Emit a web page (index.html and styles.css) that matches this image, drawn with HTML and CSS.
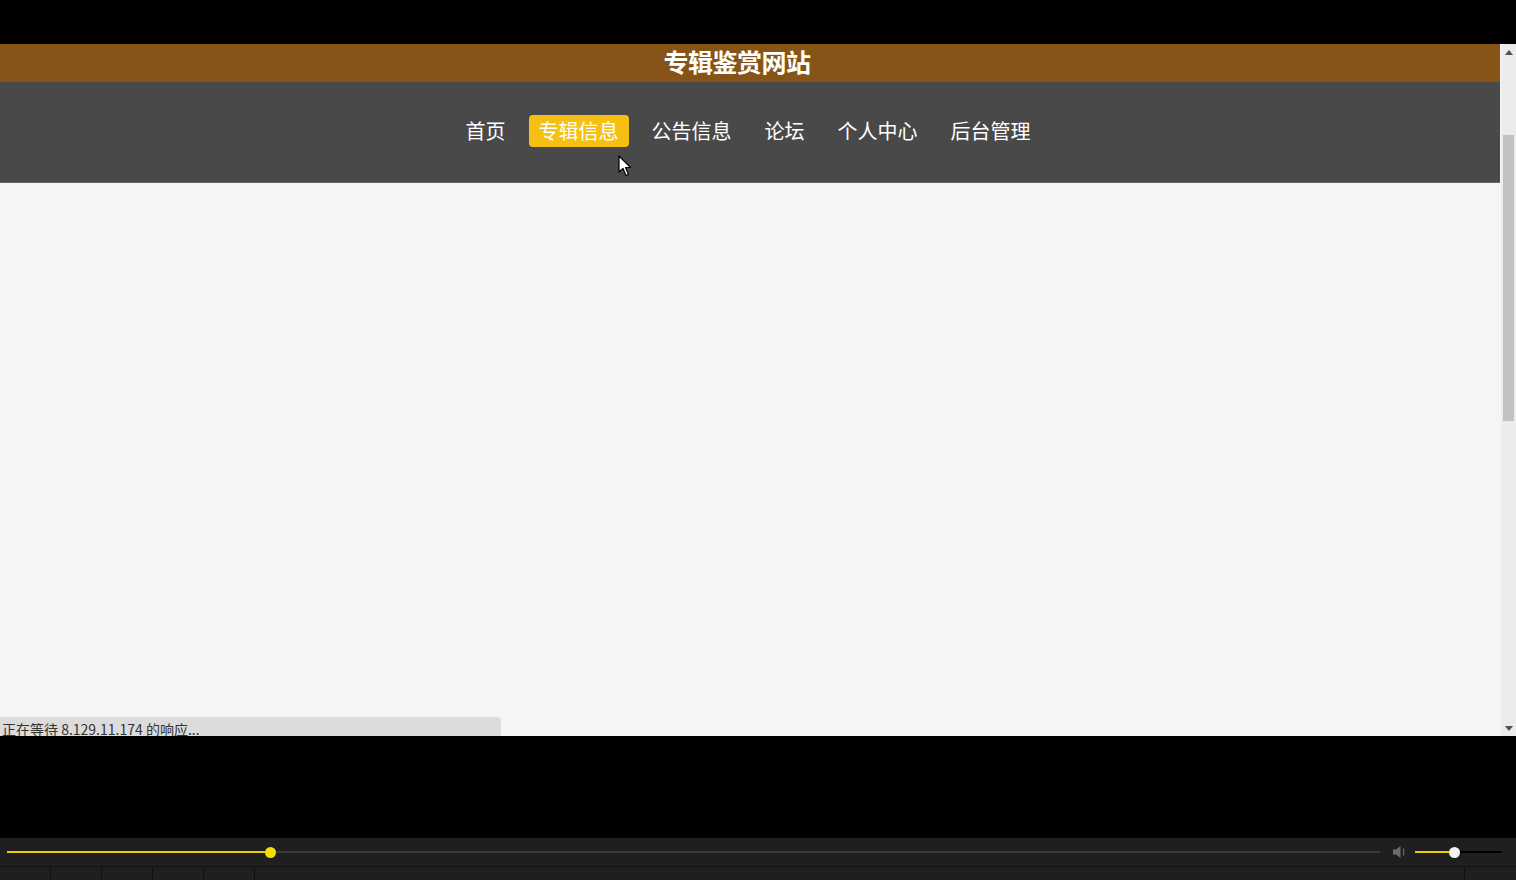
FILE: index.html
```html
<!DOCTYPE html>
<html lang="zh-CN">
<head>
    <meta charset="UTF-8">
    <meta name="viewport" content="width=device-width, initial-scale=1.0">
    <title>专辑鉴赏网站</title>
    <link rel="stylesheet" href="styles.css">
</head>
<body>
    <div class="top-band"></div>
    <div class="browser">
        <div class="page">
            <header class="site-title">专辑鉴赏网站</header>
            <nav class="menu">
                <ul>
                    <li><a href="#">首页</a></li>
                    <li><a href="#" class="current">专辑信息</a></li>
                    <li><a href="#">公告信息</a></li>
                    <li><a href="#">论坛</a></li>
                    <li><a href="#">个人中心</a></li>
                    <li><a href="#">后台管理</a></li>
                </ul>
                <!-- mouse pointer captured in the recording -->
                <svg class="cursor" width="14" height="22" viewBox="0 0 14 22">
                    <path d="M1 1 L1 17 L5 13.5 L8 20.5 L10.5 19.5 L7.5 12.5 L12.5 12.5 Z" fill="#fff" stroke="#000" stroke-width="1.2" stroke-linejoin="round"/>
                </svg>
            </nav>
            <main class="content"></main>
            <div class="status">正在等待 8.129.11.174 的响应...</div>
        </div>
        <div class="scrollbar">
            <span class="arrow up"></span>
            <div class="track"><div class="thumb"></div></div>
            <span class="arrow down"></span>
        </div>
    </div>
    <div class="black-gap"></div>
    <div class="player">
        <div class="seek">
            <div class="seek-played"></div>
            <span class="seek-knob"></span>
            <div class="seek-rest"></div>
        </div>
        <svg class="speaker" width="16" height="14" viewBox="0 0 16 14">
            <path d="M1 4.5 H4 L8.5 1 V13 L4 9.5 H1 Z" fill="#6b6b6b"/>
            <rect x="11" y="3.5" width="1.2" height="7" fill="#6b6b6b"/>
        </svg>
        <div class="volume">
            <div class="volume-level"></div>
            <span class="volume-knob"></span>
            <div class="volume-rest"></div>
        </div>
    </div>
    <div class="player-tabs">
        <span></span><span></span><span></span><span></span><span></span><span class="wide"></span><span class="last"></span>
    </div>
</body>
</html>
```

FILE: styles.css
```css
body {
    margin: 0;
    background: #000;
    font-family: "Noto Sans CJK SC", "Noto Sans", sans-serif;
    overflow: hidden;
}
.top-band {
    height: 44px;
    background: #000;
}
.browser {
    display: flex;
    height: 692px;
}
.page {
    flex: 1;
    display: flex;
    flex-direction: column;
    position: relative;
    background: #f5f5f5;
    overflow: hidden;
}
.site-title {
    height: 38px;
    line-height: 34px;
    background: #865416;
    color: #fff;
    text-align: center;
    font-size: 25px;
    font-weight: bold;
    letter-spacing: -0.5px;
    padding-right: 26px;
}
.menu {
    position: relative;
    height: 100px;
    background: #494949;
    border-bottom: 1px solid #6a6a6a;
    display: flex;
    align-items: center;
    justify-content: center;
}
.menu ul {
    display: flex;
    gap: 13px;
    margin: 0;
    padding: 0 4px 2px 0;
    list-style: none;
}
.menu a {
    display: block;
    height: 32px;
    line-height: 32px;
    padding: 0 10px;
    border-radius: 4px;
    color: #fff;
    font-size: 20px;
    text-decoration: none;
}
.menu a.current {
    background: #f5c013;
}
.cursor {
    position: absolute;
    left: 618px;
    top: 73px;
}
.content {
    flex: 1;
}
.status {
    position: absolute;
    left: 0;
    bottom: 0;
    width: 499px;
    height: 19px;
    padding-left: 2px;
    background: #dcdcdc;
    border-top-right-radius: 4px;
    color: #333;
    font-size: 14px;
    line-height: 24px;
    overflow: hidden;
}
.scrollbar {
    width: 16px;
    display: flex;
    flex-direction: column;
    background: #ececec;
    border-left: 1px solid #f7f7f7;
    box-sizing: border-box;
}
.arrow {
    height: 16px;
    display: flex;
    align-items: center;
    justify-content: center;
}
.arrow::before {
    content: "";
    border-left: 4px solid transparent;
    border-right: 4px solid transparent;
}
.arrow.up::before {
    border-bottom: 5px solid #505050;
}
.arrow.down::before {
    border-top: 5px solid #505050;
}
.track {
    flex: 1;
    padding: 75px 2px 0 2px;
}
.thumb {
    height: 286px;
    background: #c1c1c1;
}
.black-gap {
    height: 102px;
}
.player {
    height: 28px;
    background: #1f1f1f;
    display: flex;
    align-items: center;
    padding: 0 14px 0 7px;
}
.seek {
    width: 1373px;
    display: flex;
    align-items: center;
}
.seek-played {
    width: 258px;
    height: 2px;
    background: #e7cd00;
}
.seek-knob,
.volume-knob {
    width: 11px;
    height: 11px;
    border-radius: 50%;
    flex-shrink: 0;
}
.seek-knob {
    background: #f7dd00;
}
.seek-rest {
    flex: 1;
    height: 2px;
    background: #3a3a3a;
}
.speaker {
    margin: 0 7px 0 12px;
}
.volume {
    flex: 1;
    display: flex;
    align-items: center;
}
.volume-level {
    width: 34px;
    height: 2px;
    background: #e7cd00;
}
.volume-knob {
    background: #f2f2f2;
}
.volume-rest {
    flex: 1;
    height: 2px;
    background: #000;
}
.player-tabs {
    height: 14px;
    display: flex;
    background: #1f1f1f;
    border-top: 1px solid #111;
}
.player-tabs span {
    width: 50px;
    border-right: 1px solid #111;
}
.player-tabs span.wide {
    width: 1209px;
}
.player-tabs span.last {
    flex: 1;
    border-right: none;
}
```
